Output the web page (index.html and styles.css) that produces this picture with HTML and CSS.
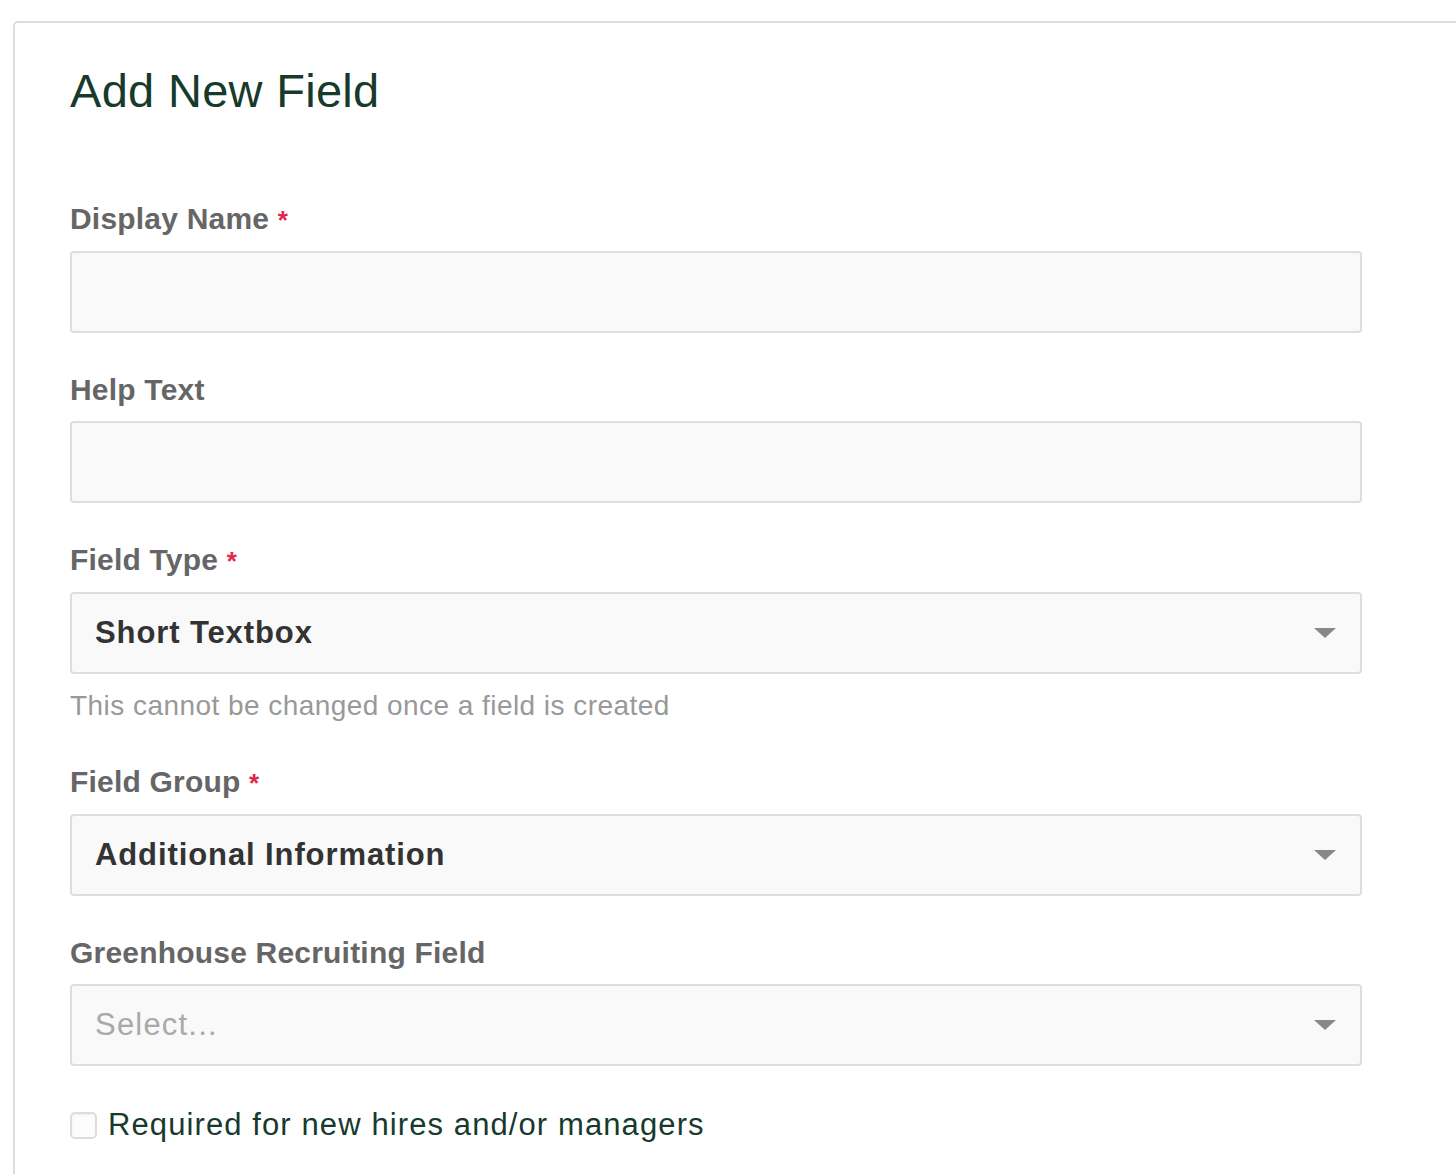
FILE: index.html
```html
<!DOCTYPE html>
<html>
  <head>
    <meta charset="utf-8" />
    <title>Add New Field</title>
    <link rel="stylesheet" href="styles.css">
  </head>
  <body>
    <div id="panel">
      <h1>Add New Field</h1>
      <form id="field-form">
        <div class="field">
          <label>Display Name <span class="req">*</span></label>
          <input type="text" />
        </div>
        <div class="field">
          <label>Help Text</label>
          <input type="text" />
        </div>
        <div class="field">
          <label>Field Type <span class="req">*</span></label>
          <div class="select">
            <span class="value">Short Textbox</span>
            <span class="caret"></span>
          </div>
          <p class="hint">This cannot be changed once a field is created</p>
        </div>
        <div class="field">
          <label>Field Group <span class="req">*</span></label>
          <div class="select">
            <span class="value">Additional Information</span>
            <span class="caret"></span>
          </div>
        </div>
        <div class="field">
          <label>Greenhouse Recruiting Field</label>
          <div class="select">
            <span class="placeholder">Select...</span>
            <span class="caret"></span>
          </div>
        </div>
        <div class="check-row">
          <span class="checkbox"></span>
          <span class="check-label">Required for new hires and/or managers</span>
        </div>
      </form>
    </div>
  </body>
</html>
```

FILE: styles.css
```css
*{
  box-sizing: border-box;
  font-family: "Liberation Sans", Arial, sans-serif;
}
html, body{
  margin: 0;
  background-color: white;
  overflow: hidden;
}
#panel{
  margin: 21px 0 0 13px;
  width: 1500px;
  height: 1200px;
  border: 2px solid #dcdedd;
  border-radius: 5px;
  padding: 40px 0 0 55px;
}
h1{
  margin: 0;
  font-size: 47px;
  line-height: 56px;
  font-weight: normal;
  color: #173a2d;
  letter-spacing: 0.3px;
}
#field-form{
  width: 1292px;
  margin-top: 82px;
}
.field{
  margin-bottom: 39px;
}
label{
  display: block;
  font-size: 30px;
  line-height: 36px;
  font-weight: bold;
  color: #666666;
  margin-bottom: 13px;
  letter-spacing: 0.2px;
}
.req{
  color: #e0294a;
  font-size: 26px;
}
input{
  display: block;
  width: 100%;
  height: 82px;
  background-color: #f9f9f9;
  border: 2px solid #dedede;
  border-radius: 4px;
}
.select{
  display: flex;
  align-items: center;
  justify-content: space-between;
  height: 82px;
  padding: 0 24px 0 23px;
  background-color: #f9f9f9;
  border: 2px solid #dedede;
  border-radius: 4px;
}
.value{
  font-size: 31px;
  font-weight: bold;
  color: #333333;
  letter-spacing: 0.9px;
}
.placeholder{
  font-size: 31px;
  color: #a9a9a9;
  letter-spacing: 1.2px;
}
.caret{
  width: 0;
  height: 0;
  border-left: 11px solid transparent;
  border-right: 11px solid transparent;
  border-top: 10px solid #888888;
}
.hint{
  margin: 14px 0 0 0;
  padding-bottom: 1px;
  font-size: 28px;
  line-height: 36px;
  color: #999999;
  letter-spacing: 0.45px;
}
.check-row{
  display: flex;
  align-items: center;
  gap: 11px;
  margin-top: 41px;
}
.checkbox{
  width: 27px;
  height: 27px;
  border: 2px solid #dddddd;
  border-radius: 5px;
  background-color: #fcfcfc;
  box-shadow: inset 0 1px 2px rgba(0, 0, 0, 0.05);
}
.check-label{
  font-size: 31px;
  line-height: 36px;
  color: #173a2d;
  letter-spacing: 1.1px;
}
```
